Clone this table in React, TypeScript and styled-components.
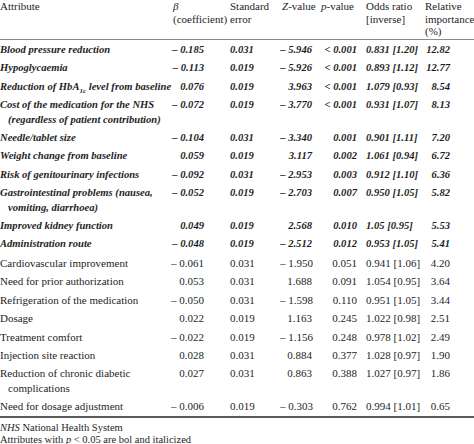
import React from 'react';
import styled, { createGlobalStyle } from 'styled-components';

const GlobalStyle = createGlobalStyle`
  html, body {
    margin: 0;
    padding: 0;
    background: #fff;
  }
  body {
    font-family: 'Liberation Serif', 'Times New Roman', serif;
    color: #1e1e1e;
    overflow: hidden;
  }
`;

const COLS = '170px 56px 54px 36px 46px 59px 53px';

interface IColumn {
  header: React.ReactNode;
  headPad: number;
  align: 'left' | 'right';
  pad: number;
}

const columns: IColumn[] = [
  { header: 'Attribute', headPad: 0, align: 'left', pad: 0 },
  {
    header: (
      <>
        <i>β</i>
        <br />
        (coefficient)
      </>
    ),
    headPad: 3,
    align: 'right',
    pad: 22,
  },
  {
    header: (
      <>
        Standard
        <br />
        error
      </>
    ),
    headPad: 4,
    align: 'left',
    pad: 4,
  },
  {
    header: (
      <>
        <i>Z</i>-value
      </>
    ),
    headPad: 2,
    align: 'right',
    pad: 4,
  },
  {
    header: (
      <>
        <i>p</i>-value
      </>
    ),
    headPad: 5,
    align: 'right',
    pad: 5,
  },
  {
    header: (
      <>
        Odds ratio
        <br />
        [inverse]
      </>
    ),
    headPad: 4,
    align: 'left',
    pad: 4,
  },
  {
    header: (
      <>
        Relative
        <br />
        importance
        <br />
        (%)
      </>
    ),
    headPad: 4,
    align: 'right',
    pad: 24,
  },
];

interface IRow {
  name: React.ReactNode;
  values: string[];
  strong?: boolean;
}

const rows: IRow[] = [
  { name: 'Blood pressure reduction', values: ['– 0.185', '0.031', '– 5.946', '< 0.001', '0.831 [1.20]', '12.82'], strong: true },
  { name: 'Hypoglycaemia', values: ['– 0.113', '0.019', '– 5.926', '< 0.001', '0.893 [1.12]', '12.77'], strong: true },
  {
    name: (
      <>
        Reduction of HbA<sub>1c</sub> level from baseline
      </>
    ),
    values: ['0.076', '0.019', '3.963', '< 0.001', '1.079 [0.93]', '8.54'],
    strong: true,
  },
  {
    name: (
      <>
        Cost of the medication for the NHS
        <br />
        (regardless of patient contribution)
      </>
    ),
    values: ['– 0.072', '0.019', '– 3.770', '< 0.001', '0.931 [1.07]', '8.13'],
    strong: true,
  },
  { name: 'Needle/tablet size', values: ['– 0.104', '0.031', '– 3.340', '0.001', '0.901 [1.11]', '7.20'], strong: true },
  { name: 'Weight change from baseline', values: ['0.059', '0.019', '3.117', '0.002', '1.061 [0.94]', '6.72'], strong: true },
  { name: 'Risk of genitourinary infections', values: ['– 0.092', '0.031', '– 2.953', '0.003', '0.912 [1.10]', '6.36'], strong: true },
  {
    name: (
      <>
        Gastrointestinal problems (nausea,
        <br />
        vomiting, diarrhoea)
      </>
    ),
    values: ['– 0.052', '0.019', '– 2.703', '0.007', '0.950 [1.05]', '5.82'],
    strong: true,
  },
  { name: 'Improved kidney function', values: ['0.049', '0.019', '2.568', '0.010', '1.05 [0.95]', '5.53'], strong: true },
  { name: 'Administration route', values: ['– 0.048', '0.019', '– 2.512', '0.012', '0.953 [1.05]', '5.41'], strong: true },
  { name: 'Cardiovascular improvement', values: ['– 0.061', '0.031', '– 1.950', '0.051', '0.941 [1.06]', '4.20'] },
  { name: 'Need for prior authorization', values: ['0.053', '0.031', '1.688', '0.091', '1.054 [0.95]', '3.64'] },
  { name: 'Refrigeration of the medication', values: ['– 0.050', '0.031', '– 1.598', '0.110', '0.951 [1.05]', '3.44'] },
  { name: 'Dosage', values: ['0.022', '0.019', '1.163', '0.245', '1.022 [0.98]', '2.51'] },
  { name: 'Treatment comfort', values: ['– 0.022', '0.019', '– 1.156', '0.248', '0.978 [1.02]', '2.49'] },
  { name: 'Injection site reaction', values: ['0.028', '0.031', '0.884', '0.377', '1.028 [0.97]', '1.90'] },
  {
    name: (
      <>
        Reduction of chronic diabetic
        <br />
        complications
      </>
    ),
    values: ['0.027', '0.031', '0.863', '0.388', '1.027 [0.97]', '1.86'],
  },
  { name: 'Need for dosage adjustment', values: ['– 0.006', '0.019', '– 0.303', '0.762', '0.994 [1.01]', '0.65'] },
];

const Page = styled.div`
  width: 474px;
`;

const Table = styled.div`
  display: flex;
  flex-direction: column;
  border-bottom: 2px solid #5a5a5a;
`;

const HeadRow = styled.div`
  display: grid;
  grid-template-columns: ${COLS};
  font-size: 11px;
  line-height: 12.5px;
  padding-bottom: 1.5px;
  border-bottom: 1.5px solid #8a8a8a;
`;

const HeadCell = styled.div<{ $pad: number }>`
  padding-left: ${(p) => p.$pad}px;
  white-space: nowrap;
`;

const BodyRow = styled.div<{ $strong?: boolean }>`
  display: grid;
  grid-template-columns: ${COLS};
  font-size: ${(p) => (p.$strong ? 10.6 : 11)}px;
  line-height: 14.4px;
  padding: 2px 0;
  font-weight: ${(p) => (p.$strong ? 700 : 400)};
  font-style: ${(p) => (p.$strong ? 'italic' : 'normal')};

  &:first-child {
    padding-top: 3px;
  }

  sub {
    font-size: 7px;
    line-height: 0;
  }
`;

const NameCell = styled.div`
  white-space: nowrap;
  padding-left: 8px;
  text-indent: -8px;
`;

const ValueCell = styled.div<{ $align: 'left' | 'right'; $pad: number }>`
  white-space: nowrap;
  text-align: ${(p) => p.$align};
  ${(p) => (p.$align === 'right' ? `padding-right: ${p.$pad}px;` : `padding-left: ${p.$pad}px;`)}
`;

const Notes = styled.div`
  font-size: 10.5px;
  line-height: 12.5px;
  padding-top: 4px;
`;

export default function App() {
  return (
    <Page>
      <GlobalStyle />
      <Table>
        <HeadRow>
          {columns.map((col, idx) => (
            <HeadCell key={idx} $pad={col.headPad}>
              {col.header}
            </HeadCell>
          ))}
        </HeadRow>
        <div>
          {rows.map((row, idx) => (
            <BodyRow key={idx} $strong={row.strong}>
              <NameCell>{row.name}</NameCell>
              {row.values.map((v, i) => (
                <ValueCell key={i} $align={columns[i + 1].align} $pad={columns[i + 1].pad}>
                  {v}
                </ValueCell>
              ))}
            </BodyRow>
          ))}
        </div>
      </Table>
      <Notes>
        <i>NHS</i> National Health System
        <br />
        Attributes with <i>p</i> &lt; 0.05 are bol and italicized
      </Notes>
    </Page>
  );
}
